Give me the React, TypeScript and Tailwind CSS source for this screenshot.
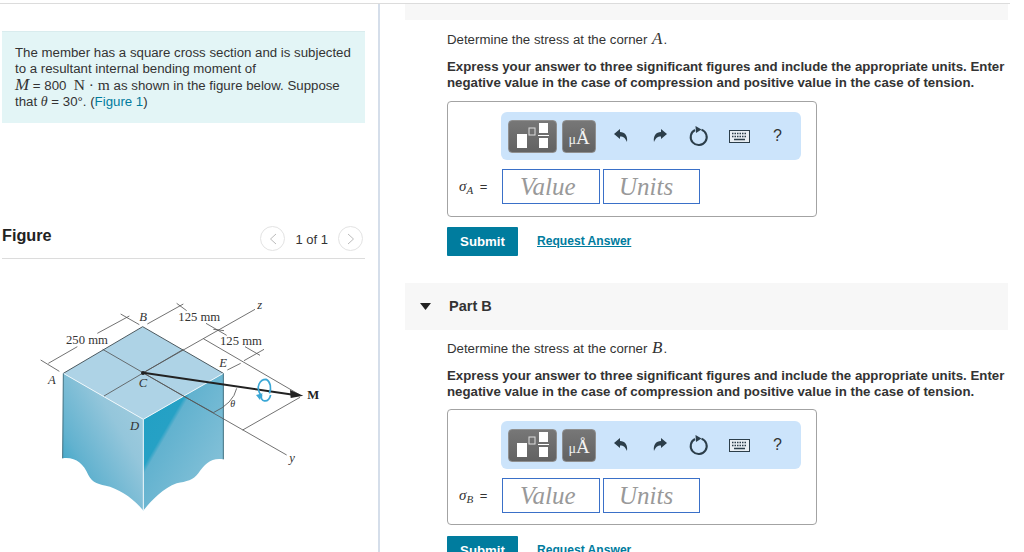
import React from "react";

const serif = { fontFamily: '"Liberation Serif", serif' };

function FigureArt() {
  const line = "#555";
  return (
    <svg width="320" height="272" viewBox="0 0 960 816" className="block">
      <defs>
        <linearGradient id="lf" x1="0" y1="1" x2="1" y2="0">
          <stop offset="0.02" stopColor="#1f9cc2" />
          <stop offset="0.3" stopColor="#62b2cf" />
          <stop offset="0.65" stopColor="#94c6db" />
          <stop offset="1" stopColor="#a6cfe0" />
        </linearGradient>
        <linearGradient id="rf" x1="0" y1="0" x2="1" y2="1">
          <stop offset="0" stopColor="#1f9fc4" />
          <stop offset="0.34" stopColor="#26a1c5" />
          <stop offset="0.37" stopColor="#62b2cf" />
          <stop offset="1" stopColor="#90c6db" />
        </linearGradient>
      </defs>
      <path d="M130 280 L370 418 L370 692 C345 660 310 635 270 620 C235 612 218 610 205 585 C190 550 165 530 128 535 Z" fill="url(#lf)" />
      <path d="M370 418 L610 280 L610 538 C575 532 555 550 535 580 C520 600 500 605 470 610 C430 625 395 660 370 692 Z" fill="url(#rf)" />
      <path d="M130 280 L368 140 L610 280 L370 418 Z" fill="#aed3e6" />
      <path d="M130 280 L368 140 L610 280" fill="none" stroke="#4d5a60" strokeWidth="3" />
      <path d="M130 280 L370 418 L610 280 M370 418 L370 692" fill="none" stroke="#eef7fb" strokeWidth="3" />
      <path d="M130 280 L128 535 M610 280 L610 538" fill="none" stroke="#3f6f80" strokeWidth="3" />
      <g fill="none" stroke={line} strokeWidth="2.5">
        <path d="M248 208 L490 348 L580 398 M490 208 L252 348 M368 278 L800 525" />
        <path d="M370 278 L705 88" />
        <path d="M550 176 L840 345 M840 352 L668 450" />
        <path d="M62 240 L118 274 M85 250 L172 200 M232 160 L328 108 M302 102 L358 134 M382 132 L490 72 M470 70 L500 92" />
        <path d="M558 130 L620 166 M675 200 L720 226 M672 242 L732 208 M622 270 L662 250 M580 148 L612 152" />
        <path d="M650 325 Q640 370 580 398" />
      </g>
      <path d="M370 278 L825 345" stroke="#222" strokeWidth="6" fill="none" />
      <path d="M810 330 L850 347 L812 354 Z" fill="#222" />
      <circle cx="369" cy="279" r="6" fill="#222" />
      <path d="M722 345 C706 320 720 298 738 298 C752 305 755 325 748 340" fill="none" stroke="#3aa7d6" strokeWidth="5" />
      <path d="M725 345 C718 365 745 372 752 345" fill="none" stroke="#3aa7d6" strokeWidth="5" />
      <path d="M708 345 L728 340 L720 360 Z" fill="#3aa7d6" />
      <g fill="#333" fontSize="38" style={serif}>
        <text x="138" y="192">250 mm</text>
        <text x="475" y="124">125 mm</text>
        <text x="600" y="196">125 mm</text>
        <g fontStyle="italic">
          <text x="358" y="124">B</text>
          <text x="84" y="312">A</text>
          <text x="356" y="322">C</text>
          <text x="330" y="449">D</text>
          <text x="598" y="262">E</text>
          <text x="712" y="87">z</text>
          <text x="808" y="546">y</text>
          <text x="631" y="382" fontSize="30">θ</text>
        </g>
        <text x="862" y="358" fontWeight="bold" fill="#222">M</text>
      </g>
    </svg>
  );
}

function Toolbar() {
  return (
    <div className="ml-[53px] w-[300px] h-[48px] rounded-[6px] bg-[#cce4fb] flex items-center pl-[7px]">
      <div className="w-[49px] h-[33px] rounded-[4px] bg-gradient-to-b from-[#777777] to-[#626262] flex items-center justify-center border border-[#8f8f8f]">
        <svg width="36" height="28" viewBox="0 0 36 28">
          <rect x="2" y="12" width="10" height="14" fill="#fff" />
          <rect x="14" y="6" width="6" height="7" fill="none" stroke="#ddd" />
          <rect x="24" y="1" width="9" height="10" fill="#fff" />
          <rect x="23" y="13" width="11" height="1" fill="#fff" />
          <rect x="24" y="16" width="9" height="10" fill="#fff" />
        </svg>
      </div>
      <div className="ml-[5px] w-[34px] h-[33px] rounded-[4px] bg-gradient-to-b from-[#777777] to-[#626262] border border-[#8f8f8f] flex items-end justify-center text-[#f2f2f2] leading-none pb-[5px]" style={serif}>
        <span className="text-[14px]">μ</span>
        <span className="text-[19px]">Å</span>
      </div>
      <svg className="ml-[17px]" width="16" height="16" viewBox="0 0 16 16">
        <path d="M1 6 L7 1 L7 4 C12 4 15 8 14 14 C12 10 11 8.5 7 8.5 L7 11 Z" fill="#2c3e4a" />
      </svg>
      <svg className="ml-[23px]" width="16" height="16" viewBox="0 0 16 16">
        <path d="M15 6 L9 1 L9 4 C4 4 1 8 2 14 C4 10 5 8.5 9 8.5 L9 11 Z" fill="#2c3e4a" />
      </svg>
      <svg className="ml-[21px]" width="20" height="22" viewBox="0 0 20 22">
        <path d="M12.5 4.6 A8 8 0 1 1 6 5" fill="none" stroke="#2c3e4a" strokeWidth="2" />
        <path d="M6.5 1 L12.5 4.5 L7 8 Z" fill="#2c3e4a" />
      </svg>
      <svg className="ml-[20px]" width="21" height="13" viewBox="0 0 21 13">
        <rect x="0.5" y="0.5" width="20" height="12" fill="#e8eef3" stroke="#2c3e4a" />
        <path d="M3 3.5 H18 M3 6.5 H18" stroke="#2c3e4a" strokeWidth="1.5" strokeDasharray="1.5 1" />
        <path d="M5 9.5 H16" stroke="#2c3e4a" strokeWidth="1.5" />
      </svg>
      <span className="ml-[23px] text-[16px] text-[#333]">?</span>
    </div>
  );
}

function AnswerBox({ sub, mt, pt }: { sub: string; mt: string; pt: string }) {
  return (
    <div className={`${mt} ${pt} w-[370px] h-[116px] border border-[#a3a3a3] rounded-[4px]`}>
      <Toolbar />
      <div className="mt-[9px] flex items-center">
        <span className="ml-[11px] w-[43px] text-[15px] text-[#333] whitespace-nowrap" style={serif}>
          <i>σ</i>
          <sub className="text-[11px] italic">{sub}</sub>
          <span className="text-[13px] ml-[3px]" style={{ fontFamily: '"Liberation Sans"' }}> =</span>
        </span>
        <div className="w-[98px] h-[35px] border border-[#3a70c8] flex items-center pl-[17px] text-[25px] italic text-[#999]" style={serif}>
          Value
        </div>
        <div className="ml-[3px] w-[97px] h-[35px] border border-[#3a70c8] flex items-center pl-[15px] text-[25px] italic text-[#999]" style={serif}>
          Units
        </div>
      </div>
    </div>
  );
}

function Actions({ mt }: { mt: string }) {
  return (
    <div className={`${mt} flex items-center`}>
      <div className="w-[71px] h-[29px] bg-[#007c9e] rounded-[1px] text-white text-[13.25px] font-bold flex items-center justify-center">Submit</div>
      <span className="ml-[19px] text-[#007c9e] text-[12.1px] font-bold underline">Request Answer</span>
    </div>
  );
}

function Prompt({ corner }: { corner: string }) {
  return (
    <>
      <p className="text-[13.25px] leading-[16px] text-[#333]">
        Determine the stress at the corner <i className="text-[17px] mx-[1px]" style={serif}>{corner}</i>.
      </p>
      <p className="mt-[11px] w-[570px] text-[13.25px] leading-[16px] font-bold text-[#333]">
        Express your answer to three significant figures and include the appropriate units. Enter negative value in the case of compression and positive value in the case of tension.
      </p>
    </>
  );
}

export default function App() {
  return (
    <div className="h-[552px] w-[1024px] overflow-hidden bg-white" style={{ fontFamily: '"Liberation Sans", Arial, sans-serif' }}>
      <div className="h-[4px] w-[1010px] border-b border-[#dcdcdc]" />
      <div className="flex h-[548px]">
        <div className="w-[380px] shrink-0 border-r-2 border-[#d5deea] pr-[13px] pl-[2px]">
          <div className="mt-[27px] h-[92px] bg-[#e3f5f6] border-t border-[#d9ecee] pl-[13px] pr-[8px] pt-[13px] text-[13.25px] leading-[16px] text-[#333]">
            The member has a square cross section and is subjected to a resultant internal bending moment of
            <br />
            <i className="text-[17px]" style={serif}>M</i> = 800 &nbsp;<span className="text-[15.5px]" style={serif}>N · m</span> as shown in the figure below. Suppose
            <br />
            that <i className="text-[14px]" style={serif}>θ</i> = 30°. (<span className="text-[#007c9e]">Figure 1</span>)
          </div>
          <div className="mt-[103px] h-[33px] border-b border-[#dcdcdc] flex items-start">
            <span className="text-[16.25px] leading-[22px] font-bold text-[#222] flex-1 -mt-[2px]">Figure</span>
            <div className="flex items-center text-[13px] text-[#333] pr-[2px]">
              <div className="w-[25px] h-[25px] rounded-full border border-[#e3e3e3] flex items-center justify-center text-[#bbb]">
                <svg width="8" height="12" viewBox="0 0 8 12"><path d="M7 1 L1.5 6 L7 11" fill="none" stroke="#bbb" /></svg>
              </div>
              <span className="ml-[10px] mr-[10px] pt-[3px]">1 of 1</span>
              <div className="w-[25px] h-[25px] rounded-full border border-[#e3e3e3] flex items-center justify-center">
                <svg width="8" height="12" viewBox="0 0 8 12"><path d="M1 1 L6.5 6 L1 11" fill="none" stroke="#bbb" /></svg>
              </div>
            </div>
          </div>
          <div className="mt-[21px] ml-[18px]">
            <FigureArt />
          </div>
        </div>
        <div className="flex-1 pl-[25px]">
          <div className="w-[603px] h-[16px] bg-[#f7f7f7]" />
          <div className="pl-[42px] pt-[11px]">
            <Prompt corner="A" />
            <AnswerBox sub="A" mt="mt-[10px]" pt="pt-[10px]" />
            <Actions mt="mt-[10px]" />
          </div>
          <div className="mt-[27px] w-[603px] h-[47px] bg-[#f7f7f7] flex items-center">
            <svg className="ml-[15px]" width="11" height="7" viewBox="0 0 11 7"><path d="M0 0 H11 L5.5 7 Z" fill="#222" /></svg>
            <span className="ml-[18px] text-[14.5px] font-bold text-[#333]">Part B</span>
          </div>
          <div className="pl-[42px] pt-[10px]">
            <Prompt corner="B" />
            <AnswerBox sub="B" mt="mt-[9px]" pt="pt-[11px]" />
            <Actions mt="mt-[11px]" />
          </div>
        </div>
      </div>
    </div>
  );
}
